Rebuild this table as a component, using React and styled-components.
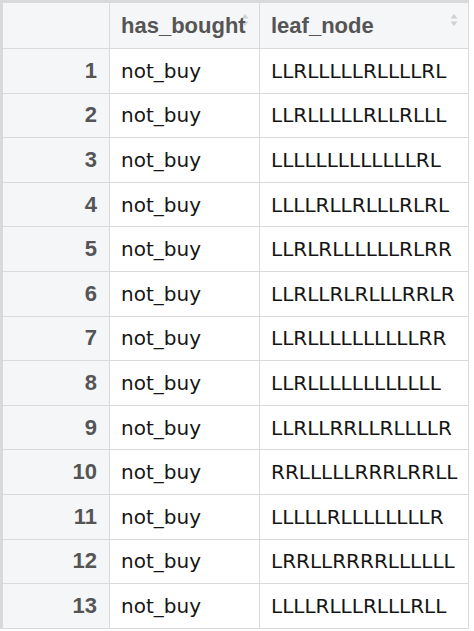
import React from 'react';
import styled, { createGlobalStyle } from 'styled-components';

const GlobalStyle = createGlobalStyle`
    html, body {
        margin: 0;
        padding: 0;
        background: #ffffff;
    }
`;

const Frame = styled.div`
    width: 466px;
    display: grid;
    grid-template-columns: 107px 150px 209px;
    grid-template-rows: 46px repeat(13, 44.6px);
    border-top: 3px solid #d8d9db;
    border-left: 3px solid #d8d9db;
`;

const BaseCell = styled.div`
    position: relative;
    display: flex;
    align-items: center;
    box-sizing: border-box;
    border-right: 1px solid #d9dadc;
    border-bottom: 1px solid #d9dadc;
    white-space: nowrap;
    overflow: hidden;
`;

const HeadCell = styled(BaseCell)`
    background: #f5f6f8;
    padding-left: 11px;
    font-family: 'Liberation Sans', Arial, sans-serif;
    font-weight: bold;
    font-size: 22px;
    color: #555555;
`;

const HeadLabel = styled.span`
    position: relative;
    z-index: 1;
`;

const SortIcon = styled.svg`
    position: absolute;
    right: 10px;
    top: 10px;
    width: 8px;
    height: 16px;
`;

const IndexCell = styled(BaseCell)`
    background: #f5f6f8;
    justify-content: flex-end;
    padding-right: 12px;
    font-family: 'Liberation Sans', Arial, sans-serif;
    font-weight: bold;
    font-size: 22px;
    color: #555555;
`;

const Cell = styled(BaseCell)`
    background: #ffffff;
    padding-left: 11px;
    font-family: 'DejaVu Sans', Verdana, sans-serif;
    font-size: 20px;
    color: #151515;
`;

const rows = [
    'LLRLLLLLRLLLLRL',
    'LLRLLLLLRLLRLLL',
    'LLLLLLLLLLLLLRL',
    'LLLLRLLRLLLRLRL',
    'LLRLRLLLLLLRLRR',
    'LLRLLRLRLLLRRLR',
    'LLRLLLLLLLLLLRR',
    'LLRLLLLLLLLLLLL',
    'LLRLLRRLLRLLLLR',
    'RRLLLLLRRRLRRLL',
    'LLLLLRLLLLLLLLR',
    'LRRLLRRRRLLLLLL',
    'LLLLRLLLRLLLRLL',
];

function Sort() {
    return (
        <SortIcon viewBox="0 0 8 16">
            <path d="M4 1 L7.5 5.5 L0.5 5.5 Z" fill="#cfd0d2" />
            <path d="M4 13 L7.5 8.5 L0.5 8.5 Z" fill="#cfd0d2" />
        </SortIcon>
    );
}

export default function App() {
    return (
        <>
            <GlobalStyle />
            <Frame>
                <HeadCell />
                <HeadCell>
                    <Sort />
                    <HeadLabel>has_bought</HeadLabel>
                </HeadCell>
                <HeadCell>
                    <Sort />
                    <HeadLabel>leaf_node</HeadLabel>
                </HeadCell>
                {rows.map((leaf, i) => (
                    <React.Fragment key={i}>
                        <IndexCell>{i + 1}</IndexCell>
                        <Cell>not_buy</Cell>
                        <Cell>{leaf}</Cell>
                    </React.Fragment>
                ))}
            </Frame>
        </>
    );
}
